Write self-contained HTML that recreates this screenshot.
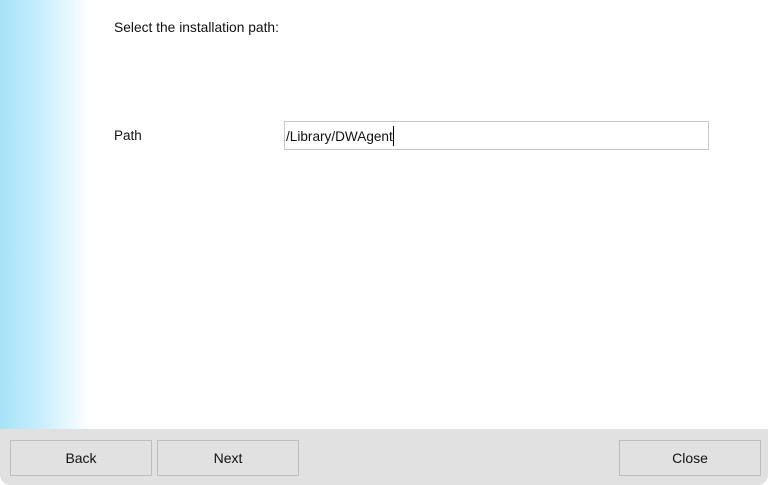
<!DOCTYPE html>
<html><head><style>
html,body{margin:0;padding:0;width:768px;height:485px;overflow:hidden;background:#fff;font-family:"Liberation Sans",sans-serif;}
.grad{position:absolute;left:0;top:0;width:90px;height:429px;background:linear-gradient(to right,#a6e2fa 0%,#c8eefc 45%,#ffffff 100%);}
.t{position:absolute;font-size:13.5px;color:#111;}
.inp{position:absolute;left:284px;top:121px;width:425px;height:29px;border:1px solid #c8c8c8;box-sizing:border-box;background:#fff;}
.inp span{position:absolute;left:1px;top:4px;font-size:13.6px;color:#111;white-space:nowrap;}
.caret{display:inline-block;width:1px;height:20px;background:#000;vertical-align:-5px;}
.bar{position:absolute;left:0;top:429px;width:768px;height:56px;background:#e1e1e1;border-radius:0 0 10px 10px;}
.btn{position:absolute;top:440px;width:142px;height:36px;border:1px solid #bdbdbd;box-sizing:border-box;background:#e1e1e1;font-size:14px;color:#111;text-align:center;line-height:34px;}
</style></head><body>
<div class="grad"></div>
<div class="t" style="left:114px;top:20px;font-size:13.8px">Select the installation path:</div>
<div class="t" style="left:114px;top:128px">Path</div>
<div class="inp"><span>/Library/DWAgent<i class="caret"></i></span></div>
<div class="bar"></div>
<div class="btn" style="left:10px">Back</div>
<div class="btn" style="left:157px">Next</div>
<div class="btn" style="left:619px">Close</div>
</body></html>
